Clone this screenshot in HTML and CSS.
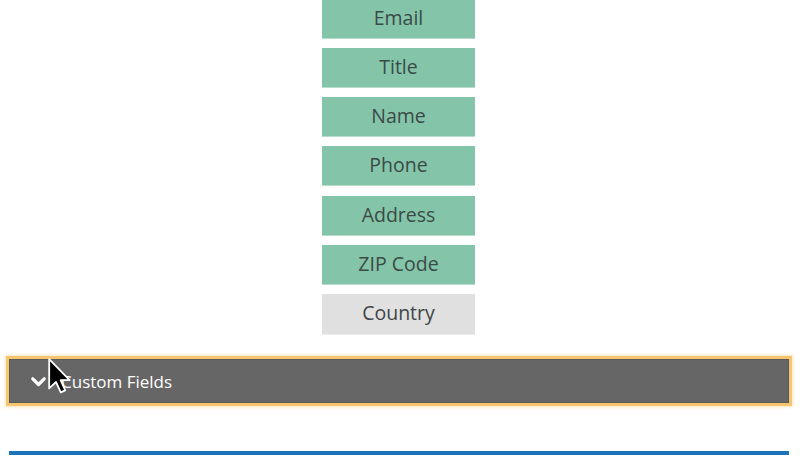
FILE: index.html
```html
<!DOCTYPE html>
<html>
<head>
<meta charset="utf-8">
<link rel="stylesheet" href="styles.css">
</head>
<body>
<div class="page">
  <div class="fields">
    <div class="field">Email</div>
    <div class="field">Title</div>
    <div class="field">Name</div>
    <div class="field">Phone</div>
    <div class="field">Address</div>
    <div class="field">ZIP Code</div>
    <div class="field field-off">Country</div>
  </div>
  <div class="section-bar">
    <svg class="chevron" width="15" height="10" viewBox="0 0 15 10"><path d="M1.8 1.8 L7.5 7.5 L13.2 1.8" fill="none" stroke="#fff" stroke-width="3.2" stroke-linecap="round" stroke-linejoin="round"/></svg>
    <span class="section-label">Custom Fields</span>
    <svg class="cursor" width="24" height="36" viewBox="0 0 12 18"><path d="M0.6 0.6 L0.6 15.2 L4 12 L6.4 17.2 L8.6 16.2 L6.3 11.1 L10.8 11.1 Z" fill="#000" stroke="#fff" stroke-width="0.9" stroke-linejoin="round"/></svg>
  </div>
  <div class="blue-bar"></div>
</div>
</body>
</html>
```
FILE: styles.css
```css
html, body {
  margin: 0;
  padding: 0;
  background: #ffffff;
  overflow: hidden;
}
.page {
  width: 800px;
  height: 456px;
  font-family: "Open Sans", "Liberation Sans", sans-serif;
}
.fields {
  display: flex;
  flex-direction: column;
  align-items: center;
  gap: 9.2px;
  margin-top: -1.2px;
}
.field {
  width: 153px;
  height: 40px;
  margin-left: -3px;
  background: #84c5aa;
  border-bottom: 1px solid #b7dccb;
  box-sizing: border-box;
  color: #3b4a47;
  font-size: 19.5px;
  line-height: 37px;
  text-align: center;
}
.field-off {
  background: #e0e0e0;
  border-bottom-color: #ececec;
  height: 41px;
  color: #3f4446;
}
.section-bar {
  position: relative;
  margin: 24px 11px 0 9px;
  height: 44px;
  box-sizing: border-box;
  background: #666666;
  border: 1px solid #595959;
  box-shadow: 0 0 0 3px #f6c66e, 0 0 3px 4px rgba(246, 198, 110, 0.45);
  display: flex;
  align-items: center;
  padding-left: 21px;
  color: #ffffff;
}
.chevron {
  display: block;
  margin-top: 2px;
}
.section-label {
  margin-left: 15px;
  font-size: 17px;
  line-height: 20px;
  margin-top: 2px;
}
.cursor {
  position: absolute;
  left: 38px;
  top: -2px;
}
.blue-bar {
  margin: 48px 11px 0 9px;
  height: 6px;
  background: #1b74b9;
}
```
